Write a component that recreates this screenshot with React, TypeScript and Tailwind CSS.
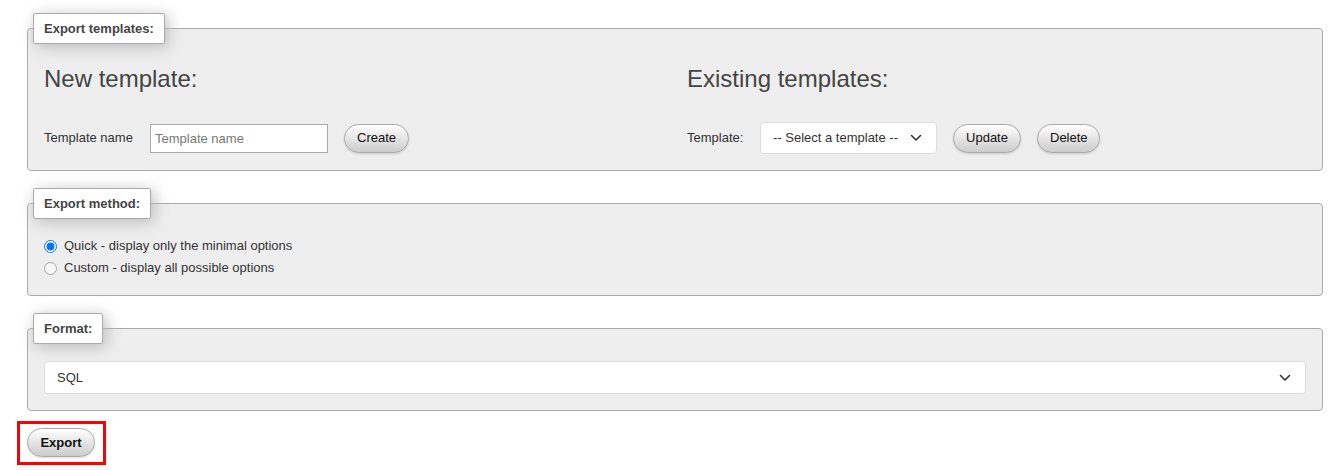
import React from "react";

const font = { fontFamily: '"Liberation Sans", Arial, sans-serif' };

const btn =
  "h-[29px] rounded-full border border-[#aaa] bg-gradient-to-b from-white to-[#ccc] px-[12px] text-[13px] text-[#111] shadow-[0_1px_2px_rgba(0,0,0,0.15)]";

function Chevron() {
  return (
    <svg width="12" height="8" viewBox="0 0 12 8" fill="none">
      <path d="M1.5 1.5 6 6l4.5-4.5" stroke="#333" strokeWidth="1.6" strokeLinecap="round" strokeLinejoin="round" />
    </svg>
  );
}

function Fieldset({ legend, children, className = "" }: { legend: string; children: React.ReactNode; className?: string }) {
  return (
    <div className={`rounded-[4px] border border-[#aaa] bg-[#eee] px-[16px] ${className}`}>
      <div className="-ml-[11px] -mt-[16px] w-fit rounded-[2px] border border-[#aaa] bg-white px-[10px] py-[7px] text-[13px] font-bold leading-[15px] text-[#444] shadow-[3px_3px_15px_#bbb]">
        {legend}
      </div>
      {children}
    </div>
  );
}

export default function App() {
  return (
    <div className="min-h-[470px] bg-white pt-[28px] text-[13px] text-[#333]" style={font}>
      <div className="ml-[27px] w-[1296px]">
        <Fieldset legend="Export templates:" className="pb-[16px]">
          <div className="flex">
            <div className="w-[643px]">
              <h2 className="mt-[21px] text-[24px] leading-[28px] text-[#444]">New template:</h2>
              <div className="mt-[29px] flex h-[32px] items-center">
                <label className="w-[106px]">Template name</label>
                <input
                  placeholder="Template name"
                  className="h-[29px] w-[178px] border border-[#aaa] bg-white px-[4px] text-[13px] text-[#333] outline-none placeholder:text-[#777]"
                />
                <button className={`${btn} ml-[16px] w-[65px]`}>Create</button>
              </div>
            </div>
            <div className="flex-1">
              <h2 className="mt-[21px] text-[24px] leading-[28px] text-[#444]">Existing templates:</h2>
              <div className="mt-[29px] flex h-[32px] items-center">
                <label className="w-[73px]">Template:</label>
                <div className="flex h-[32px] w-[177px] items-center justify-between rounded-[4px] border border-[#ddd] bg-white pl-[12px] pr-[14px] text-[#333]">
                  <span>-- Select a template --</span>
                  <Chevron />
                </div>
                <button className={`${btn} ml-[16px] w-[68px]`}>Update</button>
                <button className={`${btn} ml-[16px] w-[63px]`}>Delete</button>
              </div>
            </div>
          </div>
        </Fieldset>

        <Fieldset legend="Export method:" className="mt-[32px] pb-[16px]">
          <div className="mt-[16px] flex flex-col">
            <label className="flex h-[22px] items-center gap-[7px]">
              <input type="radio" name="m" defaultChecked className="m-0 h-[13px] w-[13px] accent-[#0075ff]" />
              Quick - display only the minimal options
            </label>
            <label className="flex h-[22px] items-center gap-[7px]">
              <input type="radio" name="m" className="m-0 h-[13px] w-[13px] opacity-60" />
              Custom - display all possible options
            </label>
          </div>
        </Fieldset>

        <Fieldset legend="Format:" className="mt-[32px] pb-[16px]">
          <div className="mt-[17px] flex h-[33px] items-center justify-between rounded-[4px] border border-[#ddd] bg-white pl-[12px] pr-[14px] text-[#333]">
            <span>SQL</span>
            <Chevron />
          </div>
        </Fieldset>
      </div>

      <div className="ml-[17px] mt-[10px] w-fit border-[3px] border-[#ff0000] pb-[5px] pl-[7px] pr-[8px] pt-[4px]">
        <button className={`${btn} w-[68px] font-bold`}>Export</button>
      </div>
    </div>
  );
}
